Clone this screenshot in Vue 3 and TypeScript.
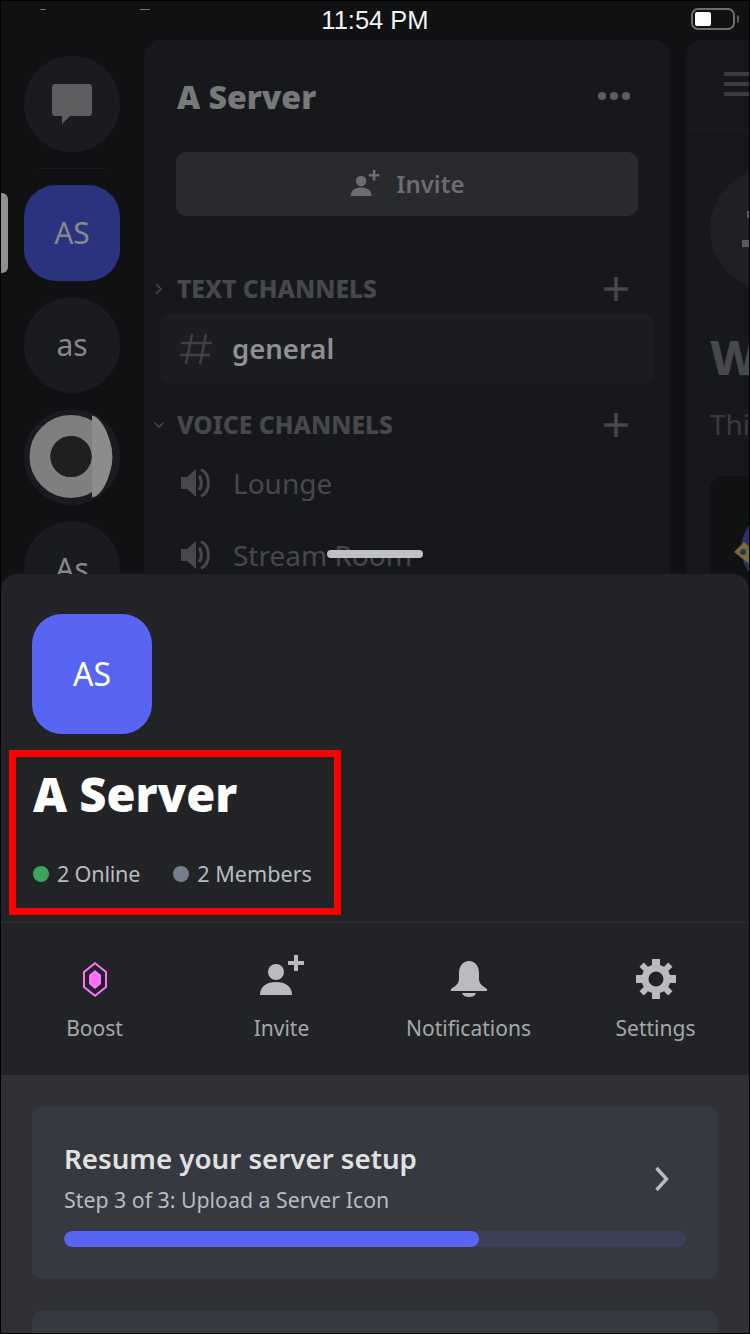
<script setup lang="ts">
interface Channel { name: string }
interface Action { label: string; icon: string }
const voiceChannels: Channel[] = [{ name: 'Lounge' }, { name: 'Stream Room' }]
const actions: Action[] = [
  { label: 'Boost', icon: 'boost' },
  { label: 'Invite', icon: 'invite' },
  { label: 'Notifications', icon: 'bell' },
  { label: 'Settings', icon: 'gear' },
]
const progress = 66.7
</script>

<template>
  <div class="screen">
    <div class="status">
      <i class="notch-a"></i>
      <i class="notch-b"></i>
      <span class="time">11:54 PM</span>
      <div class="battery"><div class="battery-level"></div></div>
      <div class="battery-tip"></div>
    </div>

    <div class="backdrop">
      <nav class="rail">
        <div class="pill"></div>
        <div class="srv">
          <svg width="40" height="40" viewBox="0 0 40 40"><path fill="#5d5e60" d="M3 0h34a3 3 0 0 1 3 3v26a3 3 0 0 1-3 3H18l-8 8v-8H3a3 3 0 0 1-3-3V3a3 3 0 0 1 3-3z"/></svg>
        </div>
        <div class="rail-sep"></div>
        <div class="srv srv-active"><span>AS</span></div>
        <div class="srv"><span>as</span></div>
        <div class="srv">
          <svg width="96" height="96" viewBox="0 0 96 96"><circle cx="47" cy="47.5" r="31" fill="none" stroke="#7f7f7f" stroke-width="21"/><circle cx="47" cy="47.5" r="20.5" fill="#201f1e"/><path fill="#8c8c8c" d="M68 6.500c9 1 20 22 20 41s-10 40-20 41z"/></svg>
        </div>
        <div class="srv"><span>As</span></div>
      </nav>

      <section class="channels">
        <header class="ch-head">
          <h2>A Server</h2>
          <div class="dots"><i></i><i></i><i></i></div>
        </header>
        <div class="invite-btn">
          <svg width="30" height="26" viewBox="0 0 44 40"><circle cx="16" cy="17" r="8" fill="#6c6d70"/><path fill="#6c6d70" d="M0 40c0-9 7-13 16-13s16 4 16 13z"/><path fill="none" stroke="#6c6d70" stroke-width="4" d="M36 0v16M28 8h16"/></svg>
          <span>Invite</span>
        </div>
        <div class="cat cat-first">
          <svg class="chev" width="10" height="14" viewBox="0 0 10 14"><path d="M2 2l5 5-5 5" fill="none" stroke="#47484b" stroke-width="1.6"/></svg>
          <span>TEXT CHANNELS</span>
          <svg class="plus" width="24" height="24" viewBox="0 0 24 24"><path d="M12 0v24M0 12h24" stroke="#47484b" stroke-width="3.4"/></svg>
        </div>
        <div class="chan-active">
          <svg width="32" height="32" viewBox="0 0 32 32"><path d="M12 1L6 31M26 1l-6 30M1 10h31M0 22h30" fill="none" stroke="#3f4043" stroke-width="2.6"/></svg>
          <span class="chan-name">general</span>
        </div>
        <div class="cat cat-voice">
          <svg class="chev" width="12" height="10" viewBox="0 0 12 10"><path d="M1.5 2.5l4.5 4.500 4.500-4.500" fill="none" stroke="#47484b" stroke-width="1.6"/></svg>
          <span>VOICE CHANNELS</span>
          <svg class="plus" width="24" height="24" viewBox="0 0 24 24"><path d="M12 0v24M0 12h24" stroke="#47484b" stroke-width="3.4"/></svg>
        </div>
        <div v-for="c in voiceChannels" :key="c.name" class="voice">
          <svg width="30" height="30" viewBox="0 0 30 30"><path fill="#47484b" d="M0 9h6l9-8v28l-9-8H0z"/><path fill="none" stroke="#47484b" stroke-width="3" d="M18 8c3 3 3 11 0 14M20 1.500c10 5 10 22 0 27"/></svg>
          <span>{{ c.name }}</span>
        </div>
      </section>

      <section class="chat">
        <div class="chat-head">
          <div class="burger"><i></i><i></i><i></i></div>
        </div>
        <div class="chat-body">
          <div class="welcome-icon"><i class="glyph-a"></i><i class="glyph-b"></i></div>
          <div class="welcome">Welcome</div>
          <div class="welcome-sub">This is</div>
          <div class="welcome-card">
            <svg width="40" height="100" viewBox="0 0 40 100"><circle cx="69" cy="73" r="38" fill="#2b3163"/><path fill="#7d6a30" d="M24 76l10-10 6 5v17l-2-1z"/><circle cx="33" cy="76" r="3" fill="#2b3163"/></svg>
          </div>
        </div>
      </section>
    </div>

    <div class="handle"></div>

    <section class="sheet">
      <div class="sheet-top">
        <div class="tile"><span>AS</span></div>
        <div class="outlined">
          <h1>A Server</h1>
          <div class="stats">
            <span class="dot dot-on"></span><span class="stat stat-a">2 Online</span>
            <span class="dot dot-off"></span><span class="stat">2 Members</span>
          </div>
        </div>
      </div>

      <div class="actions">
        <div v-for="a in actions" :key="a.label" class="action">
          <div class="action-icon">
            <svg v-if="a.icon === 'boost'" width="24" height="35" viewBox="0 0 24 35"><path fill="none" stroke="#ff73fa" stroke-width="2" d="M12 1.200L23 10v15L12 33.800 1 25V10z"/><path fill="#ff73fa" d="M12 8l6 5v9l-6 5-6-5v-9z"/></svg>
            <svg v-else-if="a.icon === 'invite'" class="icon-invite" width="44" height="40" viewBox="0 0 44 40"><circle cx="16" cy="17" r="8" fill="#b9bbbe"/><path fill="#b9bbbe" d="M0 40c0-9 7-13 16-13s16 4 16 13z"/><path fill="none" stroke="#b9bbbe" stroke-width="4" d="M36 0v16M28 8h16"/></svg>
            <svg v-else-if="a.icon === 'bell'" width="36" height="36" viewBox="0 0 36 36"><path fill="#b9bbbe" d="M18 0c6 0 10 5 10 12v6c0 4 3 7 8 10v2H0v-2c5-3 8-6 8-10v-6C8 5 12 0 18 0z"/><path fill="#b9bbbe" d="M11 32h14c-1 3-4 4-7 4s-6-1-7-4z"/></svg>
            <svg v-else width="40" height="40" viewBox="0 0 40 40"><path fill="#b9bbbe" fill-rule="evenodd" d="M16 0h8v6l4 1.700 4.200-4.200 4.300 4.300L32.300 12 34 16h6v8h-6l-1.700 4 4.200 4.200-4.300 4.300-4.200-4.200L24 34v6h-8v-6l-4-1.700-4.200 4.200-4.300-4.300L7.700 28 6 24H0v-8h6l1.700-4-4.200-4.200 4.300-4.300L12 7.700 16 6zM20 12.500a7.500 7.500 0 1 0 0 15 7.500 7.500 0 0 0 0-15z"/></svg>
          </div>
          <span class="action-label">{{ a.label }}</span>
        </div>
      </div>

      <div class="lower">
        <div class="card">
          <div class="card-row">
            <div class="card-text">
              <div class="card-title">Resume your server setup</div>
              <div class="card-sub">Step 3 of 3: Upload a Server Icon</div>
            </div>
            <svg class="card-chev" width="16" height="26" viewBox="0 0 16 26"><path d="M2.500 2l10 11-10 11" fill="none" stroke="#b9bbbe" stroke-width="3.400"/></svg>
          </div>
          <div class="track"><div class="fill" :style="{ width: progress + '%' }"></div></div>
        </div>
        <div class="card card-next"></div>
      </div>
    </section>

    <div class="frame"></div>
  </div>
</template>

<style>
html, body { margin: 0; background: #101113; }
</style>

<style scoped>
.screen {
  position: relative;
  width: 750px;
  height: 1334px;
  overflow: hidden;
  background: #101113;
  font-family: "Noto Sans", sans-serif;
  display: flex;
  flex-direction: column;
}
.frame {
  position: absolute;
  inset: 0;
  border: 1px solid #000;
  pointer-events: none;
}
.status {
  position: relative;
  height: 40px;
  flex: none;
  display: flex;
  align-items: center;
  justify-content: center;
}
.notch-a, .notch-b {
  position: absolute;
  top: 9px;
  height: 1px;
  background: #77787a;
  border-radius: 1px;
}
.notch-a { left: 40px; width: 6px; }
.notch-b { left: 140px; width: 10px; }
.time {
  font-family: "Liberation Sans", sans-serif;
  font-size: 25.500px;
  color: #f2f2f2;
  padding-top: 1px;
}
.battery {
  position: absolute;
  left: 691px;
  top: 8px;
  width: 44px;
  height: 22px;
  box-sizing: border-box;
  border: 2px solid #6d6e70;
  border-radius: 7px;
  padding: 2px;
}
.battery-level { width: 16px; height: 14px; background: #fff; border-radius: 2px; }
.battery-tip {
  position: absolute;
  left: 737px;
  top: 15px;
  width: 2px;
  height: 8px;
  background: #5a5b5d;
  border-radius: 0 2px 2px 0;
}
.backdrop {
  flex: 1;
  display: flex;
  min-height: 0;
}
.rail {
  position: relative;
  flex: none;
  width: 144px;
  padding-top: 16px;
  display: flex;
  flex-direction: column;
  align-items: center;
  gap: 16px;
}
.pill {
  position: absolute;
  left: 0;
  top: 153px;
  width: 8px;
  height: 80px;
  background: #8f8f90;
  border-radius: 0 6px 6px 0;
}
.srv {
  flex: none;
  width: 96px;
  height: 96px;
  border-radius: 50%;
  background: #1a1b1e;
  display: flex;
  align-items: center;
  justify-content: center;
  font-size: 30px;
  color: #89898b;
}
.srv span { margin: 0 0 2px; }
.srv-active { background: #2b327e; border-radius: 32px; }
.rail-sep { width: 68px; height: 1px; background: #1c1d20; flex: none; }
.channels {
  flex: none;
  width: 526px;
  background: #17181b;
  border-radius: 16px 16px 0 0;
  box-sizing: border-box;
}
.ch-head {
  height: 112px;
  padding: 0 40px 0 33px;
  box-sizing: border-box;
  display: flex;
  align-items: center;
  justify-content: space-between;
}
.ch-head h2 {
  margin: 0;
  font-size: 32px;
  font-weight: 900;
  color: #777879;
}
.dots { display: flex; gap: 4px; }
.dots i { width: 8px; height: 8px; border-radius: 50%; background: #5d5e60; }
.invite-btn {
  margin: 0 32px;
  height: 64px;
  padding-bottom: 2px;
  box-sizing: border-box;
  border-radius: 10px;
  background: #282a2e;
  display: flex;
  align-items: center;
  justify-content: center;
  gap: 17px;
  font-size: 24px;
  font-weight: 600;
  color: #6c6d70;
}
.cat {
  position: relative;
  height: 32px;
  display: flex;
  align-items: center;
  padding-left: 33px;
  font-size: 24.600px;
  font-weight: 800;
  color: #47484b;
}
.cat span { margin-bottom: 2px; }
.cat-first { margin-top: 57px; }
.cat-voice { margin-top: 25px; }
.chev { position: absolute; left: 10px; top: 9px; }
.cat-voice .chev { left: 9px; top: 11px; }
.plus { position: absolute; right: 42px; top: 4px; }
.chan-active {
  margin: 9px 16px 0;
  height: 70px;
  border-radius: 8px;
  background: #1c1d21;
  display: flex;
  align-items: center;
  padding-left: 20px;
  gap: 20px;
}
.chan-name { font-size: 27.500px; font-weight: 600; color: #8e9092; margin-bottom: 2px; }
.voice {
  height: 72px;
  display: flex;
  align-items: center;
  gap: 22px;
  padding-left: 37px;
  font-size: 28px;
  color: #47484b;
}
.cat-voice + .voice { margin-top: 6px; }
.chat {
  flex: none;
  margin-left: 16px;
  width: 64px;
  background: #17181b;
  border-radius: 16px 0 0 0;
  overflow: hidden;
}
.chat-head {
  height: 89px;
  border-bottom: 1px solid #1c1d20;
  box-sizing: border-box;
  display: flex;
  align-items: center;
  padding: 0 0 0 38px;
}
.burger { width: 26px; display: flex; flex-direction: column; gap: 6px; }
.burger i { height: 4px; background: #3b3c3e; }
.chat-body { padding: 39px 0 0 24px; width: 200px; }
.welcome-icon { position: relative; width: 122px; height: 122px; border-radius: 50%; background: #1f2023; }
.glyph-a, .glyph-b { position: absolute; background: #5b5b5b; }
.glyph-a { left: 37px; top: 43px; width: 5px; height: 7px; }
.glyph-b { left: 32px; top: 72px; width: 10px; height: 7px; }
.welcome { margin-top: 32px; font-size: 48px; font-weight: 800; color: #47484b; line-height: 70px; }
.welcome-sub { margin-top: 12px; font-size: 28px; color: #3a3b3e; line-height: 40px; }
.welcome-card {
  margin-top: 32px;
  width: 200px;
  height: 200px;
  background: #101113;
  border-radius: 12px 0 0 0;
  overflow: hidden;
}
.welcome-card svg { display: block; }
.handle {
  position: absolute;
  left: 327px;
  top: 550px;
  width: 96px;
  height: 8px;
  border-radius: 4px;
  background: #c0c1c4;
}
.sheet {
  position: absolute;
  left: 1px;
  right: 1px;
  top: 574px;
  bottom: 0;
  border-radius: 16px 16px 0 0;
  overflow: hidden;
  display: flex;
  flex-direction: column;
  background: #212327;
}
.sheet-top {
  height: 349px;
  flex: none;
  box-sizing: border-box;
  padding: 40px 0 0 31px;
  border-bottom: 1px solid #2d2f33;
}
.tile {
  width: 120px;
  height: 120px;
  border-radius: 30px;
  background: #5865f2;
  color: #fff;
  font-size: 32px;
  display: flex;
  align-items: center;
  justify-content: center;
}
.tile span { margin: 0 0 2px; }
.outlined {
  box-sizing: border-box;
  width: 332px;
  height: 165px;
  margin: 16px 0 0 -23px;
  border: 7px solid #ff0000;
  padding: 6px 0 0 17px;
}
.outlined h1 {
  margin: 0;
  font-size: 47px;
  line-height: 62px;
  font-weight: 900;
  color: #fff;
}
.stats {
  margin-top: 34px;
  display: flex;
  align-items: center;
  font-size: 21.600px;
  color: #b9bbbe;
}
.dot { width: 16px; height: 16px; border-radius: 50%; flex: none; margin-right: 8px; }
.dot-on { background: #3ba55d; }
.dot-off { background: #747f8d; }
.stat-a { margin-right: 33px; letter-spacing: -0.2px; }
.actions {
  height: 152px;
  flex: none;
  display: grid;
  grid-template-columns: repeat(4, 1fr);
  box-sizing: border-box;
}
.action {
  display: flex;
  flex-direction: column;
  align-items: center;
  color: #b9bbbe;
}
.action-icon {
  height: 68px;
  margin-top: 22px;
  display: flex;
  align-items: center;
  justify-content: center;
}
.icon-invite { margin-bottom: 8px; }
.action-label { font-size: 21px; line-height: 30px; color: #a5a7aa; }
.lower {
  flex: 1;
  background: #2f3136;
  padding: 32px 31px 0;
  display: flex;
  flex-direction: column;
  gap: 32px;
}
.card {
  flex: none;
  height: 172px;
  box-sizing: border-box;
  border-radius: 10px;
  background: #36393f;
  padding: 31px 32px 0;
}
.card-row { display: flex; justify-content: space-between; align-items: center; padding-right: 16px; }
.card-title { font-size: 27.700px; line-height: 40px; font-weight: 600; color: #e0e1e3; }
.card-sub { margin-top: 3px; font-size: 21.300px; line-height: 38px; color: #b9bbbe; }
.track { margin-top: 12px; height: 16px; border-radius: 8px; background: #3c3f58; overflow: hidden; }
.fill { height: 100%; border-radius: 8px; background: #5865f2; }
</style>
